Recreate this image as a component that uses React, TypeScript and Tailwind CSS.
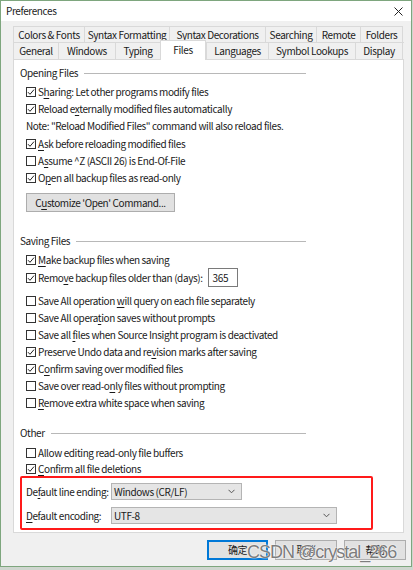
import React from "react";

const FONT = "font-['Noto_Sans_CJK_SC','Noto_Sans',sans-serif]";
const T = "text-[10px] tracking-[-0.4px] text-[#1a1a1a] leading-none whitespace-nowrap";

// "&x" marks the access key letter, drawn underlined
function Label({ text }: { text: string }) {
  const i = text.indexOf("&");
  if (i < 0) return <>{text}</>;
  return (
    <>
      {text.slice(0, i)}
      <span className="underline underline-offset-[2px]">{text[i + 1]}</span>
      {text.slice(i + 2)}
    </>
  );
}

function Check({ on, text, h = "h-[17px]" }: { on: boolean; text: string; h?: string }) {
  return (
    <div className={`flex items-center ${h} pl-[12px]`}>
      <span className="w-[10px] h-[10px] border border-[#333] bg-white flex items-center justify-center shrink-0">
        {on && (
          <svg width="8" height="8" viewBox="0 0 8 8" fill="none" stroke="#222" strokeWidth="1">
            <path d="M1 4.2 L3 6.3 L7 1.6" />
          </svg>
        )}
      </span>
      <span className={`ml-[2px] ${T}`}>
        <Label text={text} />
      </span>
    </div>
  );
}

function Group({ title }: { title: string }) {
  return (
    <div className="flex items-center h-[16px] pl-[6px] w-[292px]">
      <span className={T}>{title}</span>
      <span className="flex-1 ml-[6px] h-px bg-[#b8b8b8]" />
    </div>
  );
}

function Combo({ value, w }: { value: string; w: string }) {
  return (
    <div className={`${w} h-[17px] bg-[#e5e5e5] border border-[#b4b4b4] flex items-center justify-between pl-[2px] pr-[6px]`}>
      <span className={T}>{value}</span>
      <svg width="7" height="5" viewBox="0 0 7 5" fill="none" stroke="#555" strokeWidth="1">
        <path d="M0.5 0.8 L3.5 3.8 L6.5 0.8" />
      </svg>
    </div>
  );
}

const row1 = [
  ["Colors & Fonts", "w-[71px]"],
  ["Syntax Formatting", "w-[85px]"],
  ["Syntax Decorations", "w-[96px]"],
  ["Searching", "w-[51px]"],
  ["Remote", "w-[44px]"],
  ["Folders", "w-[43px]"],
];

const row2 = [
  ["General", "w-[45px]"],
  ["Windows", "w-[57px]"],
  ["Typing", "w-[45px]"],
  ["Files", "w-[46px]"],
  ["Languages", "w-[62px]"],
  ["Symbol Lookups", "w-[87px]"],
  ["Display", "w-[48px]"],
];

export default function App() {
  return (
    <div className={`w-[413px] h-[570px] bg-[#cfd6cf] overflow-hidden ${FONT}`}>
      <div className="relative w-[412px] h-[567px] border border-[#7ea67e] bg-[#f0f0f0] flex flex-col">
        {/* title bar */}
        <div className="h-[20px] bg-white flex items-center justify-between pl-[5px] pr-[8px] shrink-0">
          <span className={T}>Preferences</span>
          <svg width="9" height="9" viewBox="0 0 9 9" stroke="#222" strokeWidth="1">
            <path d="M0.5 0.5 L8.5 8.5 M8.5 0.5 L0.5 8.5" />
          </svg>
        </div>

        {/* tabs */}
        <div className="ml-[12px] mt-[5px] w-[391px]">
          <div className="flex h-[16px]">
            {row1.map(([t, w], i) => (
              <div
                key={t}
                className={`${w} h-full border-t border-l border-[#d9d9d9] ${i === row1.length - 1 ? "border-r" : ""} bg-[#f0f0f0] flex items-center justify-center ${T}`}
              >
                {t}
              </div>
            ))}
          </div>
          <div className="flex h-[17px] border-t border-[#d9d9d9] items-start">
            {row2.map(([t, w], i) =>
              t === "Files" ? (
                <div
                  key={t}
                  className={`${w} h-[20px] -mt-[3px] relative z-10 bg-white border-t border-l border-r border-[#d9d9d9] flex items-start justify-center pt-[4px] ${T}`}
                >
                  {t}
                </div>
              ) : (
                <div
                  key={t}
                  className={`${w} h-full border-l border-[#d9d9d9] ${i === row2.length - 1 ? "border-r" : ""} bg-[#f0f0f0] flex items-center justify-center ${T}`}
                >
                  {t}
                </div>
              )
            )}
          </div>
        </div>

        {/* page */}
        <div className="ml-[12px] w-[391px] h-[474px] bg-white border border-[#d9d9d9] flex flex-col">
          <div className="h-[5px]" />
          <Group title="Opening Files" />
          <div className="h-[2px]" />
          <Check on text="S&haring: Let other programs modify files" />
          <Check on text="Reload e&xternally modified files automatically" />
          <div className={`h-[18px] flex items-center pl-[12px] ${T}`}>
            Note: "Reload Modified Files" command will also reload files.
          </div>
          <Check on text="&Ask before reloading modified files" />
          <Check on={false} text="A&ssume ^Z (ASCII 26) is End-Of-File" />
          <Check on text="O&pen all backup files as read-only" />
          <div className="h-[7px]" />
          <div className="pl-[12px]">
            <button className={`w-[149px] h-[19px] bg-[#e1e1e1] border border-[#adadad] flex items-center justify-center ${T}`}>
              <Label text="C&ustomize 'Open' Command..." />
            </button>
          </div>

          <div className="h-[21px]" />
          <Group title="Saving Files" />
          <div className="h-[2px]" />
          <Check on text="&Make backup files when saving" />
          <div className="flex items-center h-[19px]">
            <Check on text="Remo&ve backup files older than (days):" h="h-[19px]" />
            <div className={`ml-[5px] w-[30px] h-[19px] border border-[#7a7a7a] bg-white flex items-center pl-[4px] ${T}`}>
              365
            </div>
          </div>
          <div className="h-[5px]" />
          <Check on={false} text="Save All operation &will query on each file separately" />
          <Check on={false} text="Save All opera&tion saves without prompts" />
          <Check on={false} text="Save all &files when Source Insight program is deactivated" />
          <Check on text="Preserve Undo data and re&vision marks after saving" />
          <Check on text="C&onfirm saving over modified files" />
          <Check on={false} text="Save over read-o&nly files without prompting" />
          <Check on={false} text="&Remove extra white space when saving" />

          <div className="h-[14px]" />
          <Group title="Other" />
          <div className="h-[3px]" />
          <Check on={false} text="Allow editing read-only file buffers" />
          <Check on text="&Confirm all file deletions" h="h-[15px]" />

          {/* highlighted defaults */}
          <div className="ml-[6px] w-[353px] h-[54px] border-2 border-[#ff1a1a] rounded-[2px] pt-[5px] pl-[4px] flex flex-col gap-[7px]">
            <div className="flex items-center">
              <span className={`w-[85px] ${T}`}>
                <Label text="De&fault line ending:" />
              </span>
              <Combo value="Windows (CR/LF)" w="w-[131px]" />
            </div>
            <div className="flex items-center">
              <span className={`w-[85px] ${T}`}>
                <Label text="&Default encoding:" />
              </span>
              <Combo value="UTF-8" w="w-[226px]" />
            </div>
          </div>
        </div>

        {/* dialog buttons */}
        <div className="flex justify-end gap-[7px] pr-[5px] mt-[7px]">
          <button className={`w-[61px] h-[20px] bg-[#e1e1e1] border-2 border-[#0078d7] ${T}`}>确定</button>
          <button className={`w-[62px] h-[20px] bg-[#e1e1e1] border border-[#adadad] ${T}`}>取消</button>
          <button className={`w-[62px] h-[20px] bg-[#e1e1e1] border border-[#adadad] ${T}`}>帮助</button>
        </div>

        {/* watermark */}
        <div className="absolute left-[246px] top-[542px] text-[18px] tracking-[-1px] leading-none text-[#5a5a5a]/80 font-['Liberation_Sans',sans-serif] [text-shadow:0_0_2px_#fff,0_0_1px_#fff] whitespace-nowrap">
          CSDN @crystal_266
        </div>
      </div>
    </div>
  );
}
